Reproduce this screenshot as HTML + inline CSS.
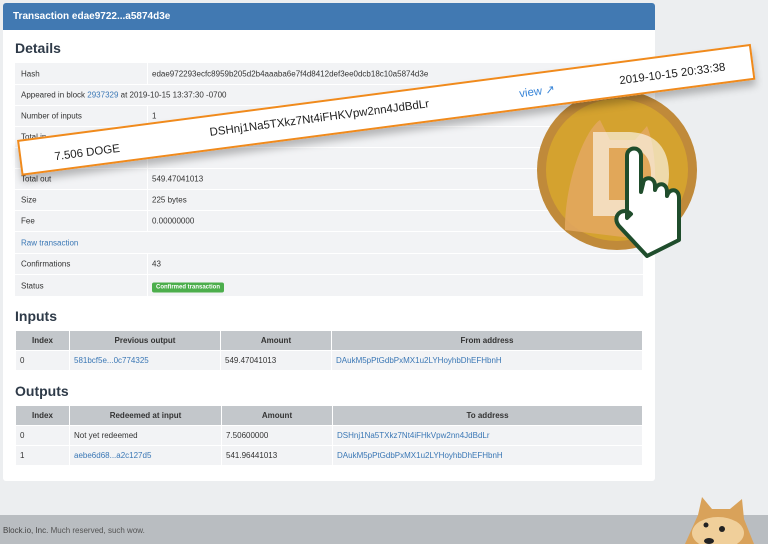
<!DOCTYPE html>
<html><head><meta charset="utf-8"><style>
*{margin:0;padding:0;box-sizing:border-box}
body{width:768px;height:544px;overflow:hidden;background:#eceef0;font-family:"Liberation Sans",sans-serif;font-size:8px;color:#333;position:relative}
.card{position:absolute;left:3px;top:3px;width:652px;height:478px;background:#fff;border-radius:3px}
.hdr{position:absolute;left:3px;top:3px;width:652px;height:27px;background:#4179b2;border-radius:3px 3px 0 0;color:#fff;font-weight:bold;font-size:10px;padding:8px 0 0 10px}
h2{position:absolute;left:15px;font-size:14px;font-weight:bold;color:#2e3a48}
.r{position:absolute;left:15px;width:628px;background:#f2f3f5;border-bottom:1px solid #fff}
.r span{position:absolute;top:50%;transform:translateY(-50%);white-space:nowrap}
.r .k{left:6px}.r .v{left:137px}
.r .sep{position:absolute;left:132px;top:0;bottom:0;width:1px;background:#fff}
a{color:#3a77b5;text-decoration:none}
.badge{background:#4cae4c;color:#fff;font-size:6px;font-weight:bold;padding:2px 4px;border-radius:2px}
table{position:absolute;left:15px;width:628px;border-collapse:collapse}
th{background:#c3c7cb;height:20px;font-weight:bold;font-size:8px;border:1px solid #fff;color:#333}
td{background:#f2f3f5;height:20px;border:1px solid #fff;padding-left:4px}
.foot{position:absolute;left:0;top:515px;width:768px;height:29px;background:#b9bdc1;color:#555;font-size:8px;padding:11px 0 0 3px}
.banner{position:absolute;left:17px;top:140px;width:740px;height:36px;background:#fff;border:2px solid #f08a1c;transform-origin:0 0;transform:rotate(-7.46deg);box-shadow:0 6px 8px rgba(0,0,0,.25);font-size:11.5px;color:#222}
.banner span{position:absolute;top:10px;white-space:nowrap}
</style></head><body>
<div class="card"></div>
<div class="hdr">Transaction edae9722...a5874d3e</div>
<h2 style="top:40px">Details</h2>
<div class="r" style="top:63px;height:22px"><div class="sep"></div><span class="k">Hash</span><span class="v">edae972293ecfc8959b205d2b4aaaba6e7f4d8412def3ee0dcb18c10a5874d3e</span></div>
<div class="r" style="top:85px;height:21px"><span class="k">Appeared in block <a>2937329</a> at 2019-10-15 13:37:30 -0700</span></div>
<div class="r" style="top:106px;height:21px"><div class="sep"></div><span class="k">Number of inputs</span><span class="v">1</span></div>
<div class="r" style="top:127px;height:21px"><div class="sep"></div><span class="k">Total in</span></div>
<div class="r" style="top:148px;height:21px"><div class="sep"></div></div>
<div class="r" style="top:169px;height:21px"><div class="sep"></div><span class="k">Total out</span><span class="v">549.47041013</span></div>
<div class="r" style="top:190px;height:21px"><div class="sep"></div><span class="k">Size</span><span class="v">225 bytes</span></div>
<div class="r" style="top:211px;height:21px"><div class="sep"></div><span class="k">Fee</span><span class="v">0.00000000</span></div>
<div class="r" style="top:232px;height:22px"><span class="k"><a>Raw transaction</a></span></div>
<div class="r" style="top:254px;height:21px"><div class="sep"></div><span class="k">Confirmations</span><span class="v">43</span></div>
<div class="r" style="top:275px;height:22px"><div class="sep"></div><span class="k">Status</span><span class="v"><span class="badge" style="position:static">Confirmed transaction</span></span></div>
<h2 style="top:308px">Inputs</h2>
<table style="top:330px"><tr><th style="width:54px">Index</th><th style="width:151px">Previous output</th><th style="width:111px">Amount</th><th>From address</th></tr>
<tr><td>0</td><td><a>581bcf5e...0c774325</a></td><td>549.47041013</td><td><a>DAukM5pPtGdbPxMX1u2LYHoyhbDhEFHbnH</a></td></tr></table>
<h2 style="top:383px">Outputs</h2>
<table style="top:405px"><tr><th style="width:54px">Index</th><th style="width:152px">Redeemed at input</th><th style="width:111px">Amount</th><th>To address</th></tr>
<tr><td>0</td><td>Not yet redeemed</td><td>7.50600000</td><td><a>DSHnj1Na5TXkz7Nt4iFHkVpw2nn4JdBdLr</a></td></tr>
<tr><td>1</td><td><a>aebe6d68...a2c127d5</a></td><td>541.96441013</td><td><a>DAukM5pPtGdbPxMX1u2LYHoyhbDhEFHbnH</a></td></tr></table>
<div class="foot"><b style="color:#444;font-weight:normal">Block.io, Inc.</b> Much reserved, such wow.</div>
<svg style="position:absolute;left:680px;top:495px" width="75" height="49" viewBox="0 0 75 49">
<path d="M18 20 L22 2 L32 14 L50 14 L62 4 L64 24 L74 49 L5 49 Z" fill="#d9a25a"/>
<ellipse cx="38" cy="38" rx="26" ry="16" fill="#f0cf9a"/>
<circle cx="26" cy="30" r="2.5" fill="#222"/><circle cx="42" cy="34" r="3" fill="#222"/>
<ellipse cx="29" cy="46" rx="5" ry="3" fill="#222"/>
</svg>
<svg style="position:absolute;left:535px;top:90px" width="180" height="175" viewBox="0 0 180 175">
<circle cx="82" cy="80" r="80" fill="#c08a3a"/>
<circle cx="82" cy="80" r="71" fill="#d4a22f"/>
<path d="M30 140 C30 90 50 40 65 30 L75 50 L100 50 L112 36 C122 60 124 110 112 150 Z" fill="#e3a860" opacity=".85"/>
<path d="M58 42 L92 42 C124 42 134 62 134 84 C134 106 122 126 92 126 L58 126 Z M74 58 V110 H92 C110 110 116 98 116 84 C116 70 110 58 92 58 Z" fill="#fff" opacity=".6"/>
<path d="M92 66 C92 56 106 56 106 66 L106 102 L108 94 C108 86 120 86 120 96 L120 100 C122 92 132 92 132 102 L132 106 C134 98 144 98 144 108 L144 150 L112 166 L84 136 C76 126 88 116 96 124 L92 128 Z" fill="#fff" stroke="#1f4d2c" stroke-width="4" stroke-linejoin="round"/>
</svg>
<div class="banner"><span style="left:33px;top:14px">7.506 DOGE</span><span style="left:190px">DSHnj1Na5TXkz7Nt4iFHKVpw2nn4JdBdLr</span><span style="left:502px;color:#3a86d8">view ↗</span><span style="left:603px;top:12px">2019-10-15 20:33:38</span></div>
</body></html>
